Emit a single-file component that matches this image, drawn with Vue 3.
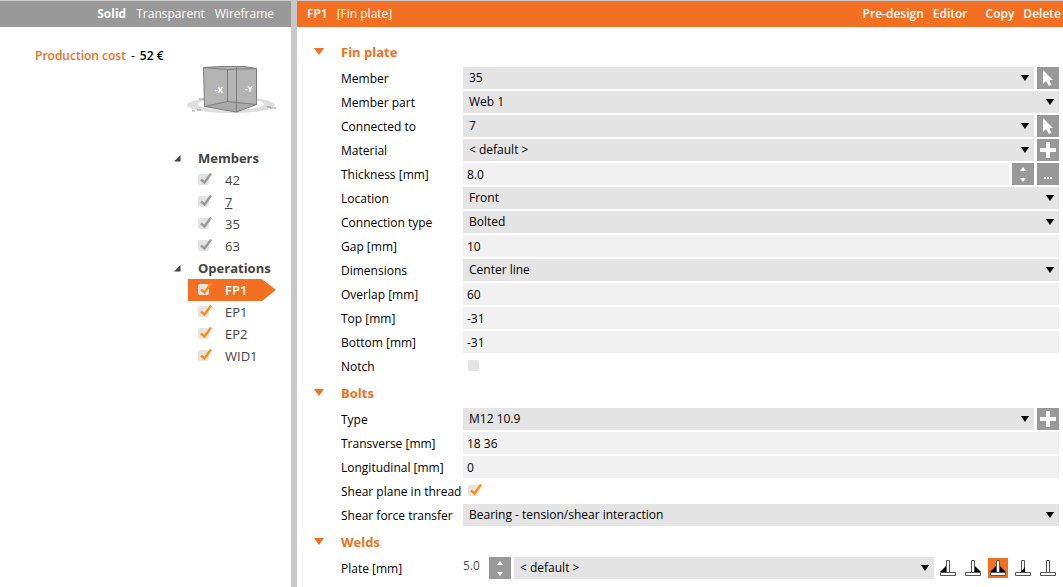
<template>
  <div class="app">
    <aside class="sidebar">
      <nav class="view-bar">
        <button
          v-for="mode in viewModes"
          :key="mode"
          type="button"
          :class="{ active: mode === viewMode }"
          @click="viewMode = mode"
        >{{ mode }}</button>
      </nav>
      <p class="cost"><strong>Production cost</strong><span>-</span><b>52 €</b></p>
      <svg class="cube" width="92" height="52" viewBox="185 64 92 52">
        <ellipse cx="231" cy="105" rx="44" ry="8" fill="#dedede" />
        <ellipse cx="231" cy="104" rx="33" ry="6" fill="#fff" />
        <path d="M192 111h3M197 110h4M199 99h5M267 107h4M270 108h6" stroke="#999" fill="none" />
        <path d="M203.5 67.5L220 66.5H244L256.5 68.5V104.5L236.5 112L204.5 106.5Z" fill="#b4b4b4" />
        <path d="M204.5 106.5L227.5 101.5L256.5 104.5L236.5 112Z" fill="#a9a9a9" />
        <path
          d="M203.5 67.5L220 66.5H244L256.5 68.5V104.5L236.5 112L204.5 106.5L203.5 67.5L227.5 69.5L256.5 68.5M227.5 69.5V101.5L204.5 106.5M227.5 101.5L256.5 104.5M236.5 66.5V112"
          fill="none"
          stroke="#7d7d7d"
        />
        <text x="215" y="93">-X</text>
        <text x="245" y="92">-Y</text>
      </svg>
      <div class="tree">
        <div v-for="group in tree" :key="group.title">
          <button type="button" class="group-title" @click="group.open = !group.open">
            <svg width="7" height="7" viewBox="0 0 7 7"><path d="M6.5 0V6.5H0Z" fill="#444" /></svg>
            {{ group.title }}
          </button>
          <ul v-if="group.open">
            <li
              v-for="item in group.items"
              :key="item.name"
              :class="{ selected: item.name === selected }"
              @click="selected = item.name"
            >
              <span class="tick" :class="{ muted: group.muted }">
                <input :id="'item-' + item.name" v-model="item.checked" type="checkbox" />
                <svg width="15" height="13" viewBox="0 0 15 13"><path d="M3 6.5L6.5 9.5L13 0.5" /></svg>
              </span>
              <label :for="'item-' + item.name" :class="{ underlined: item.name === '7' }">{{ item.name }}</label>
            </li>
          </ul>
        </div>
      </div>
    </aside>

    <main class="panel">
      <header class="panel-bar">
        <b>FP1</b>
        <span class="kind">[Fin plate]</span>
        <button type="button">Pre-design</button>
        <button type="button">Editor</button>
        <button type="button" class="copy">Copy</button>
        <button type="button">Delete</button>
      </header>

      <section v-for="section in sections" :key="section.title">
        <h2>
          <svg width="10" height="7" viewBox="0 0 10 7"><path d="M0 0H10L5 7Z" fill="#f36f21" /></svg>
          {{ section.title }}
        </h2>
        <div v-for="row in section.rows" :key="row.id" class="row">
          <label :for="row.id">{{ row.label }}</label>
          <div class="field">
            <template v-if="row.type === 'weld'">
              <input :id="row.id" v-model="row.value" type="text" class="size" />
              <span class="spinner">
                <button type="button" aria-label="Increase" @click="step(row, 1)">
                  <svg width="6" height="4" viewBox="0 0 6 4"><path d="M0 4H6L3 0Z" /></svg>
                </button>
                <button type="button" aria-label="Decrease" @click="step(row, -1)">
                  <svg width="6" height="4" viewBox="0 0 6 4"><path d="M0 0H6L3 4Z" /></svg>
                </button>
              </span>
              <span class="dropdown">
                <select aria-label="Weld material"><option>&lt; default &gt;</option></select>
              </span>
              <span class="welds">
                <button
                  v-for="weld in welds"
                  :key="weld.name"
                  type="button"
                  :aria-label="weld.name"
                  :class="{ active: weld.name === weldType }"
                  @click="weldType = weld.name"
                >
                  <svg width="20" height="20" viewBox="0 0 20 20">
                    <path :d="weld.fill" fill="#000" />
                    <path d="M8.5 2.5H11.5V14.5H8.5ZM2.5 14.5H17.5V17.5H2.5Z" fill="#fff" stroke="#555" />
                    <path v-if="weld.over" :d="weld.over" fill="#000" />
                  </svg>
                </button>
              </span>
            </template>

            <span v-else-if="row.type === 'select'" class="dropdown">
              <select :id="row.id" v-model="row.value">
                <option>{{ row.value }}</option>
              </select>
            </span>

            <span v-else-if="row.type === 'check'" class="tick">
              <input :id="row.id" v-model="row.value" type="checkbox" />
              <svg width="15" height="13" viewBox="0 0 15 13"><path d="M3 6.5L6.5 9.5L13 0.5" /></svg>
            </span>

            <input v-else :id="row.id" v-model="row.value" type="text" />

            <span v-if="row.action === 'more'" class="spinner">
              <button type="button" aria-label="Increase" @click="step(row, 1)">
                <svg width="6" height="4" viewBox="0 0 6 4"><path d="M0 4H6L3 0Z" /></svg>
              </button>
              <button type="button" aria-label="Decrease" @click="step(row, -1)">
                <svg width="6" height="4" viewBox="0 0 6 4"><path d="M0 0H6L3 4Z" /></svg>
              </button>
            </span>
            <button v-if="row.action" type="button" class="action" :aria-label="row.action">
              <svg width="22" height="22" viewBox="0 0 22 22"><path :d="actionIcons[row.action]" /></svg>
            </button>
          </div>
        </div>
      </section>
    </main>
  </div>
</template>

<script setup>
import { ref } from 'vue';

const viewModes = ['Solid', 'Transparent', 'Wireframe'];
const viewMode = ref('Solid');
const selected = ref('FP1');
const weldType = ref('both');

const toItems = (names) => names.map(name => ({ name, checked: true }));

const tree = ref([
  { title: 'Members', open: true, muted: true, items: toItems(['42', '7', '35', '63']) },
  { title: 'Operations', open: true, muted: false, items: toItems(['FP1', 'EP1', 'EP2', 'WID1']) },
]);

const sections = ref([
  {
    title: 'Fin plate',
    rows: [
      { id: 'member', label: 'Member', type: 'select', value: '35', action: 'pick' },
      { id: 'member-part', label: 'Member part', type: 'select', value: 'Web 1' },
      { id: 'connected', label: 'Connected to', type: 'select', value: '7', action: 'pick' },
      { id: 'material', label: 'Material', type: 'select', value: '< default >', action: 'add' },
      { id: 'thickness', label: 'Thickness [mm]', type: 'text', value: '8.0', action: 'more' },
      { id: 'location', label: 'Location', type: 'select', value: 'Front' },
      { id: 'connection', label: 'Connection type', type: 'select', value: 'Bolted' },
      { id: 'gap', label: 'Gap [mm]', type: 'text', value: '10' },
      { id: 'dimensions', label: 'Dimensions', type: 'select', value: 'Center line' },
      { id: 'overlap', label: 'Overlap [mm]', type: 'text', value: '60' },
      { id: 'top', label: 'Top [mm]', type: 'text', value: '-31' },
      { id: 'bottom', label: 'Bottom [mm]', type: 'text', value: '-31' },
      { id: 'notch', label: 'Notch', type: 'check', value: false },
    ],
  },
  {
    title: 'Bolts',
    rows: [
      { id: 'bolt-type', label: 'Type', type: 'select', value: 'M12 10.9', action: 'add' },
      { id: 'transverse', label: 'Transverse [mm]', type: 'text', value: '18 36' },
      { id: 'longitudinal', label: 'Longitudinal [mm]', type: 'text', value: '0' },
      { id: 'shear-plane', label: 'Shear plane in thread', type: 'check', value: true },
      { id: 'shear-force', label: 'Shear force transfer', type: 'select', value: 'Bearing - tension/shear interaction' },
    ],
  },
  {
    title: 'Welds',
    rows: [{ id: 'plate', label: 'Plate [mm]', type: 'weld', value: '5.0' }],
  },
]);

const actionIcons = {
  pick: 'M6 3V17L9 14L12 19L14.5 18L12.5 13H16Z',
  add: 'M9 3H13V9H19V13H13V19H9V13H3V9H9Z',
  more: 'M7 14H9V16H7ZM10 14H12V16H10ZM13 14H15V16H13Z',
};

const welds = [
  { name: 'left', fill: 'M8 8V14H2Z' },
  { name: 'right', fill: 'M12 8V14H18Z' },
  { name: 'both', fill: 'M8 8V14H2ZM12 8V14H18Z' },
  { name: 'butt', fill: '', over: 'M12 9V14H8Z' },
  { name: 'none', fill: '' },
];

const step = (row, delta) => {
  row.value = (parseFloat(row.value) + delta).toFixed(1);
};
</script>

<style>
body {
  background: #fff;
}
</style>

<style scoped>
.app {
  display: flex;
  min-height: 100vh;
  box-sizing: border-box;
  border-top: 1px solid #ccc;
  font-family: "Open Sans", "Noto Sans", sans-serif;
  font-size: 12px;
  line-height: 16px;
  color: #000;
}

button,
input,
select {
  font: inherit;
  color: inherit;
  margin: 0;
  padding: 0;
  border: none;
  border-radius: 0;
  background: none;
}

button {
  cursor: pointer;
}

svg {
  display: block;
  flex-shrink: 0;
}

.sidebar {
  flex: 0 0 291px;
  border-right: 6px solid #c8c8c8;
}

.view-bar {
  display: flex;
  align-items: center;
  justify-content: flex-end;
  gap: 10px;
  height: 26px;
  padding-right: 17px;
  background: #999;
  color: #fff;
}

.view-bar .active {
  font-weight: 700;
}

.cost {
  display: flex;
  gap: 5px;
  margin: 21px 0 0 35px;
}

.cost strong {
  color: #f36f21;
  font-weight: 600;
}

.cost b {
  font-weight: 600;
}

.cube {
  margin-left: 185px;
}

.cube text {
  fill: #fff;
  font-size: 8px;
  font-weight: 700;
}

.tree {
  margin: 31px 15px 0 174px;
  font-size: 13px;
  color: #444;
}

.group-title {
  display: flex;
  align-items: center;
  gap: 17px;
  height: 22px;
  font-weight: 700;
}

.tree ul {
  list-style: none;
  margin: 0;
  padding: 0 0 0 14px;
}

.tree li {
  display: flex;
  align-items: center;
  gap: 12px;
  height: 22px;
  padding-left: 10px;
}

.tree .selected {
  background: #f36f21;
  color: #fff;
  font-weight: 600;
  clip-path: polygon(0 0, 84% 0, 100% 50%, 84% 100%, 0 100%);
}

.underlined {
  text-decoration: underline;
}

.tick {
  position: relative;
  width: 15px;
  height: 13px;
  margin-bottom: 2px;
}

.tick input {
  appearance: none;
  display: block;
  width: 11px;
  height: 11px;
  margin-top: 1px;
  border-radius: 2px;
  background: #e4e4e4;
}

.tick svg {
  position: absolute;
  top: 0;
  left: 0;
  pointer-events: none;
  visibility: hidden;
}

.tick input:checked + svg {
  visibility: visible;
}

.tick path {
  fill: none;
  stroke: #ff8c0a;
  stroke-width: 2.4;
}

.muted path {
  stroke: #999;
}

.panel {
  flex: 1;
  min-width: 0;
}

.panel-bar {
  display: flex;
  align-items: center;
  gap: 9px;
  height: 26px;
  padding: 0 2px 0 10px;
  background: #f36f21;
  color: #fff;
}

.panel-bar b,
.panel-bar button {
  font-weight: 600;
}

.kind {
  margin-right: auto;
}

.copy {
  margin-left: 9px;
}

section {
  padding: 0 4px 0 17px;
}

section h2 {
  display: flex;
  align-items: center;
  gap: 17px;
  height: 27px;
  margin: 0;
  padding-bottom: 2px;
  font-size: 13px;
  font-weight: 700;
  color: #f36f21;
}

.panel-bar + section {
  padding-top: 11px;
}

.row {
  display: flex;
  height: 22px;
  margin-bottom: 2px;
}

.row > label {
  flex: 0 0 122px;
  padding: 4px 0 0 27px;
  white-space: nowrap;
}

.field {
  flex: 1;
  display: flex;
  gap: 3px;
  min-width: 0;
}

.field .tick {
  margin: 4px 0 0 5px;
}

.field > input {
  flex: 1;
  min-width: 0;
  padding: 1px 4px 0;
  background: #f1f1f1;
}

.field .size {
  flex: 0 0 23px;
  padding: 0 0 4px;
  background: none;
  color: #555;
}

.dropdown {
  position: relative;
  flex: 1;
  display: flex;
}

.dropdown select {
  appearance: none;
  width: 100%;
  padding: 0 20px 0 6px;
  background: #e4e4e4;
}

.dropdown::after {
  content: "";
  position: absolute;
  top: 8px;
  right: 5px;
  border: 4px solid transparent;
  border-top: 6px solid #000;
  border-bottom: none;
  pointer-events: none;
}

.spinner {
  display: flex;
  flex-direction: column;
  width: 22px;
  background: #999;
}

.spinner button {
  flex: 1;
  display: flex;
  align-items: center;
  justify-content: center;
}

.spinner path,
.action path {
  fill: #fff;
}

.action {
  width: 22px;
  background: #999;
}

.welds {
  display: flex;
  align-items: center;
  gap: 5px;
  padding: 0 1px;
}

.welds .active {
  background: #f36f21;
}
</style>
